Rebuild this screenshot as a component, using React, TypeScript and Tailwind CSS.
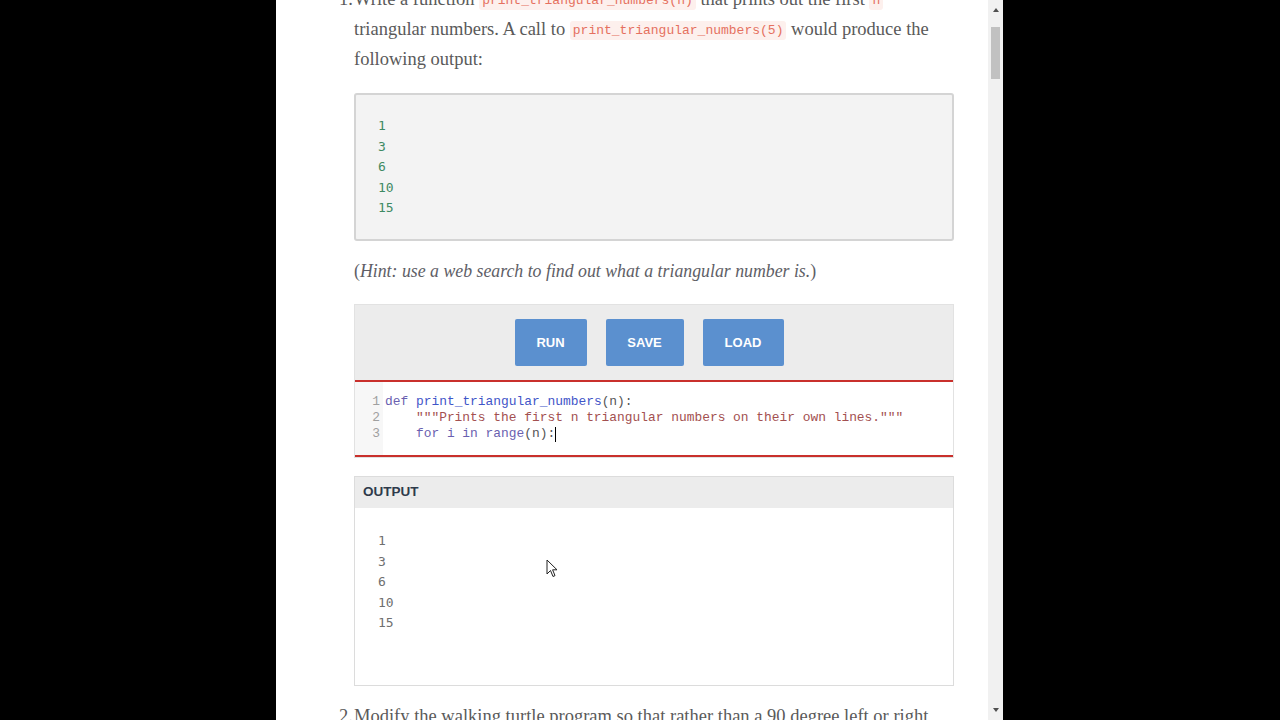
import React from "react";

const serif = { fontFamily: '"Liberation Serif", "DejaVu Serif", serif' };

function Code({ children }: { children: React.ReactNode }) {
    return (
        <code className="font-['Liberation_Mono',monospace] text-[13px] leading-none text-[#e5705f] bg-[#fdf0ed] px-[3px] py-[2px] rounded-[3px] align-[1px]">
            {children}
        </code>
    );
}

function Numbers({ color }: { color: string }) {
    return (
        <div className={`font-['DejaVu_Sans_Mono',monospace] text-[13px] leading-[20.5px] ${color}`}>
            {["1", "3", "6", "10", "15"].map((n) => (
                <div key={n}>{n}</div>
            ))}
        </div>
    );
}

export default function App() {
    return (
        <div className="w-full h-[720px] bg-black overflow-hidden flex pl-[276px]">
            <div className="w-[727px] h-full bg-white flex">
                <main className="w-[712px] h-full overflow-hidden pl-[78px] text-[#5a5a5a]" style={serif}>
                    <div className="w-[600px]">
                        {/* item 1 */}
                        <div className="flex -mt-[16px] text-[18.5px] leading-[30px]">
                            <span className="w-[15px] -ml-[15px] shrink-0">1.</span>
                            <p className="whitespace-nowrap">
                                Write a function <Code>print_triangular_numbers(n)</Code> that prints out the first <Code>n</Code>
                                <br />
                                triangular numbers. A call to <Code>print_triangular_numbers(5)</Code> would produce the
                                <br />
                                following output:
                            </p>
                        </div>

                        <div className="mt-[19px] h-[148px] border-2 border-[#d4d4d4] rounded-[3px] bg-[#f3f3f3] pl-[22px] pt-[21px]">
                            <Numbers color="text-[#3f8a63]" />
                        </div>

                        <p className="mt-[15px] text-[17.8px] leading-[30px] text-[#5e5e66]">
                            (<i>Hint: use a web search to find out what a triangular number is.</i>)
                        </p>

                        {/* editor */}
                        <div className="mt-[18px] border border-[#e2e2e2]">
                            <div className="bg-[#ececec] flex justify-center gap-[19px] pt-[14px] pb-[14px] pr-[10px] font-['Liberation_Sans',sans-serif] font-bold text-[13px] text-white">
                                <button className="w-[72px] h-[47px] bg-[#5b90cf] rounded-[2px]">RUN</button>
                                <button className="w-[78px] h-[47px] bg-[#5b90cf] rounded-[2px]">SAVE</button>
                                <button className="w-[81px] h-[47px] bg-[#5b90cf] rounded-[2px]">LOAD</button>
                            </div>
                            <div className="border-t-2 border-b-2 border-[#c9302c] bg-white flex font-['Liberation_Mono',monospace] text-[12.9px] leading-[16px]">
                                <div className="w-[28px] bg-[#f7f7f7] pt-[12px] pb-[13px] pr-[3px] text-right text-[#a0a0a0]">
                                    <div>1</div>
                                    <div>2</div>
                                    <div>3</div>
                                </div>
                                <div className="pl-[2px] pt-[12px] pb-[13px] whitespace-pre">
                                    <div>
                                        <span className="text-[#6a5fb0]">def</span>{" "}
                                        <span className="text-[#3f55c8]">print_triangular_numbers</span>
                                        <span className="text-[#555]">(n):</span>
                                    </div>
                                    <div className="text-[#a35050]">{'    """Prints the first n triangular numbers on their own lines."""'}</div>
                                    <div className="flex items-center">
                                        <span className="text-[#6a5fb0]">{"    for i in "}</span>
                                        <span className="text-[#6a5fb0]">range</span>
                                        <span className="text-[#555]">(n):</span>
                                        <span className="inline-block w-px h-[15px] bg-black" />
                                    </div>
                                </div>
                            </div>
                        </div>

                        {/* output */}
                        <div className="relative mt-[18px] h-[210px] border border-[#dcdcdc]">
                            <div className="h-[31px] bg-[#ececec] flex items-center pl-[8px] font-['Liberation_Sans',sans-serif] font-bold text-[13.5px] text-[#2e3a4b]">
                                OUTPUT
                            </div>
                            <div className="pl-[23px] pt-[23px]">
                                <Numbers color="text-[#6f6f6f]" />
                            </div>
                            <svg className="absolute left-[191px] top-[82px]" width="12" height="19" viewBox="0 0 12 19">
                                <path d="M1 1 L1 15 L4.5 11.5 L7 17.5 L9 16.6 L6.6 10.8 L11 10.8 Z" fill="white" stroke="#222" strokeWidth="1" />
                            </svg>
                        </div>

                        {/* item 2 */}
                        <div className="flex mt-[15px] text-[18.5px] leading-[30px]">
                            <span className="w-[15px] -ml-[15px] shrink-0">2.</span>
                            <p className="whitespace-nowrap">
                                Modify the walking turtle program so that rather than a 90 degree left or right
                            </p>
                        </div>
                    </div>
                </main>

                {/* scrollbar */}
                <div className="w-[15px] h-full bg-[#f1f1f1] flex flex-col items-center">
                    <div className="h-[20px] flex items-center justify-center">
                        <div className="w-0 h-0 border-l-[3.5px] border-r-[3.5px] border-b-[4px] border-l-transparent border-r-transparent border-b-[#505050]" />
                    </div>
                    <div className="mt-[7px] w-[9px] h-[52px] bg-[#c1c1c1]" />
                    <div className="flex-1" />
                    <div className="h-[20px] flex items-center justify-center">
                        <div className="w-0 h-0 border-l-[3.5px] border-r-[3.5px] border-t-[4px] border-l-transparent border-r-transparent border-t-[#505050]" />
                    </div>
                </div>
            </div>
        </div>
    );
}
